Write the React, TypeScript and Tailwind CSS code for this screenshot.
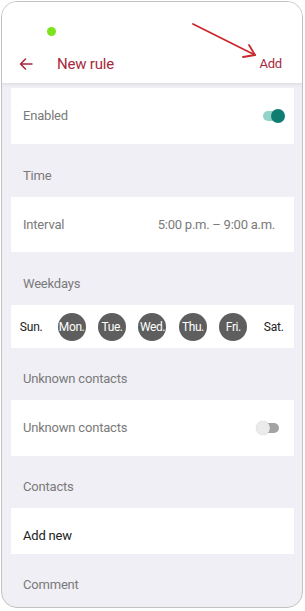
import React from "react";

function Label({ text, h = 53 }: { text: string; h?: number }) {
  return (
    <div
      className={`flex items-end pl-[12px] pb-[13px] text-[13px] leading-[16px] tracking-[-0.2px] text-[#7a7a7a] ${
        h === 53 ? "h-[53px]" : "h-[52px]"
      }`}
    >
      {text}
    </div>
  );
}

function ToggleOn() {
  return (
    <div className="relative w-[22px] h-[14px] flex items-center">
      <div className="w-[20px] h-[10px] rounded-full bg-[#93d3c9]" />
      <div className="absolute right-0 top-0 w-[14px] h-[14px] rounded-full bg-[#0d7e70]" />
    </div>
  );
}

function ToggleOff() {
  return (
    <div className="relative w-[23px] h-[14px] flex items-center justify-end">
      <div className="w-[20px] h-[10px] rounded-full bg-[#a3a3a3]" />
      <div className="absolute left-0 top-0 w-[14px] h-[14px] rounded-full bg-[#ebebeb] shadow-[0_0_1px_rgba(0,0,0,0.25)]" />
    </div>
  );
}

const days = [
  { d: "Sun.", on: false },
  { d: "Mon.", on: true },
  { d: "Tue.", on: true },
  { d: "Wed.", on: true },
  { d: "Thu.", on: true },
  { d: "Fri.", on: true },
  { d: "Sat.", on: false },
];

export default function App() {
  return (
    <div
      className="w-[305px] h-[611px] bg-white relative overflow-hidden"
      style={{ fontFamily: "Roboto, 'Noto Sans', sans-serif" }}
    >
      <div className="ml-[1px] mt-[1px] w-[302px] h-[607px] border border-[#c2c2c2] rounded-[16px] overflow-hidden bg-[#f0eff5] flex flex-col">
        {/* status area */}
        <div className="bg-white h-[43px] pl-[45px] pt-[25px]">
          <div className="w-[9px] h-[9px] rounded-full bg-[#7ce31c]" />
        </div>
        {/* header */}
        <div className="bg-white h-[39px] flex items-center pl-[17px] pr-[20px] border-b border-[#e3e3e6] shadow-[0_1px_2px_rgba(0,0,0,0.06)]">
          <svg width="14" height="12" viewBox="0 0 14 12" fill="none">
            <path
              d="M13 6H1.5M6.5 1L1.5 6L6.5 11"
              stroke="#a8243b"
              strokeWidth="1.5"
              strokeLinecap="round"
              strokeLinejoin="round"
            />
          </svg>
          <div className="ml-[24px] text-[15px] leading-[18px] tracking-[-0.2px] text-[#a8283d]">New rule</div>
          <div className="ml-auto text-[13px] leading-[16px] tracking-[-0.2px] text-[#a8283d]">Add</div>
        </div>

        <div className="pl-[9px] pr-[8px] flex flex-col">
          <div className="h-[4px]" />
          <div className="bg-white h-[56px] flex items-center pl-[12px] pr-[9px] justify-between">
            <span className="text-[13px] tracking-[-0.2px] text-[#7a7a7a]">Enabled</span>
            <ToggleOn />
          </div>

          <Label text="Time" />
          <div className="bg-white h-[55px] flex items-center pl-[12px] pr-[19px] justify-between">
            <span className="text-[13px] tracking-[-0.2px] text-[#7a7a7a]">Interval</span>
            <span className="text-[13px] tracking-[-0.25px] text-[#7a7a7a]">5:00 p.m. – 9:00 a.m.</span>
          </div>

          <Label text="Weekdays" />
          <div className="bg-white h-[43px] grid grid-cols-7 items-center">
            {days.map((x) => (
              <div key={x.d} className="flex justify-center">
                {x.on ? (
                  <div className="w-[28px] h-[28px] rounded-full bg-[#5e5e5e] flex items-center justify-center text-white text-[12px] tracking-[-0.4px]">
                    {x.d}
                  </div>
                ) : (
                  <span className="text-[12px] tracking-[-0.2px] text-[#222222]">{x.d}</span>
                )}
              </div>
            ))}
          </div>

          <Label text="Unknown contacts" h={52} />
          <div className="bg-white h-[56px] flex items-center pl-[12px] pr-[15px] justify-between">
            <span className="text-[13px] tracking-[-0.2px] text-[#7a7a7a]">Unknown contacts</span>
            <ToggleOff />
          </div>

          <Label text="Contacts" h={52} />
          <div className="bg-white h-[46px] flex items-center pl-[12px] pt-[10px]">
            <span className="text-[13px] leading-[16px] tracking-[-0.2px] text-[#222222]">Add new</span>
          </div>

          <Label text="Comment" h={52} />
        </div>
      </div>

      {/* annotation arrow */}
      <svg
        className="absolute left-0 top-0 pointer-events-none"
        width="305"
        height="100"
        viewBox="0 0 305 100"
        fill="none"
      >
        <path d="M193 24L255 55" stroke="#c9282d" strokeWidth="1.8" strokeLinecap="round" />
        <path d="M249 45L255 55L243 57" stroke="#c9282d" strokeWidth="1.8" strokeLinecap="round" strokeLinejoin="round" />
      </svg>
    </div>
  );
}
